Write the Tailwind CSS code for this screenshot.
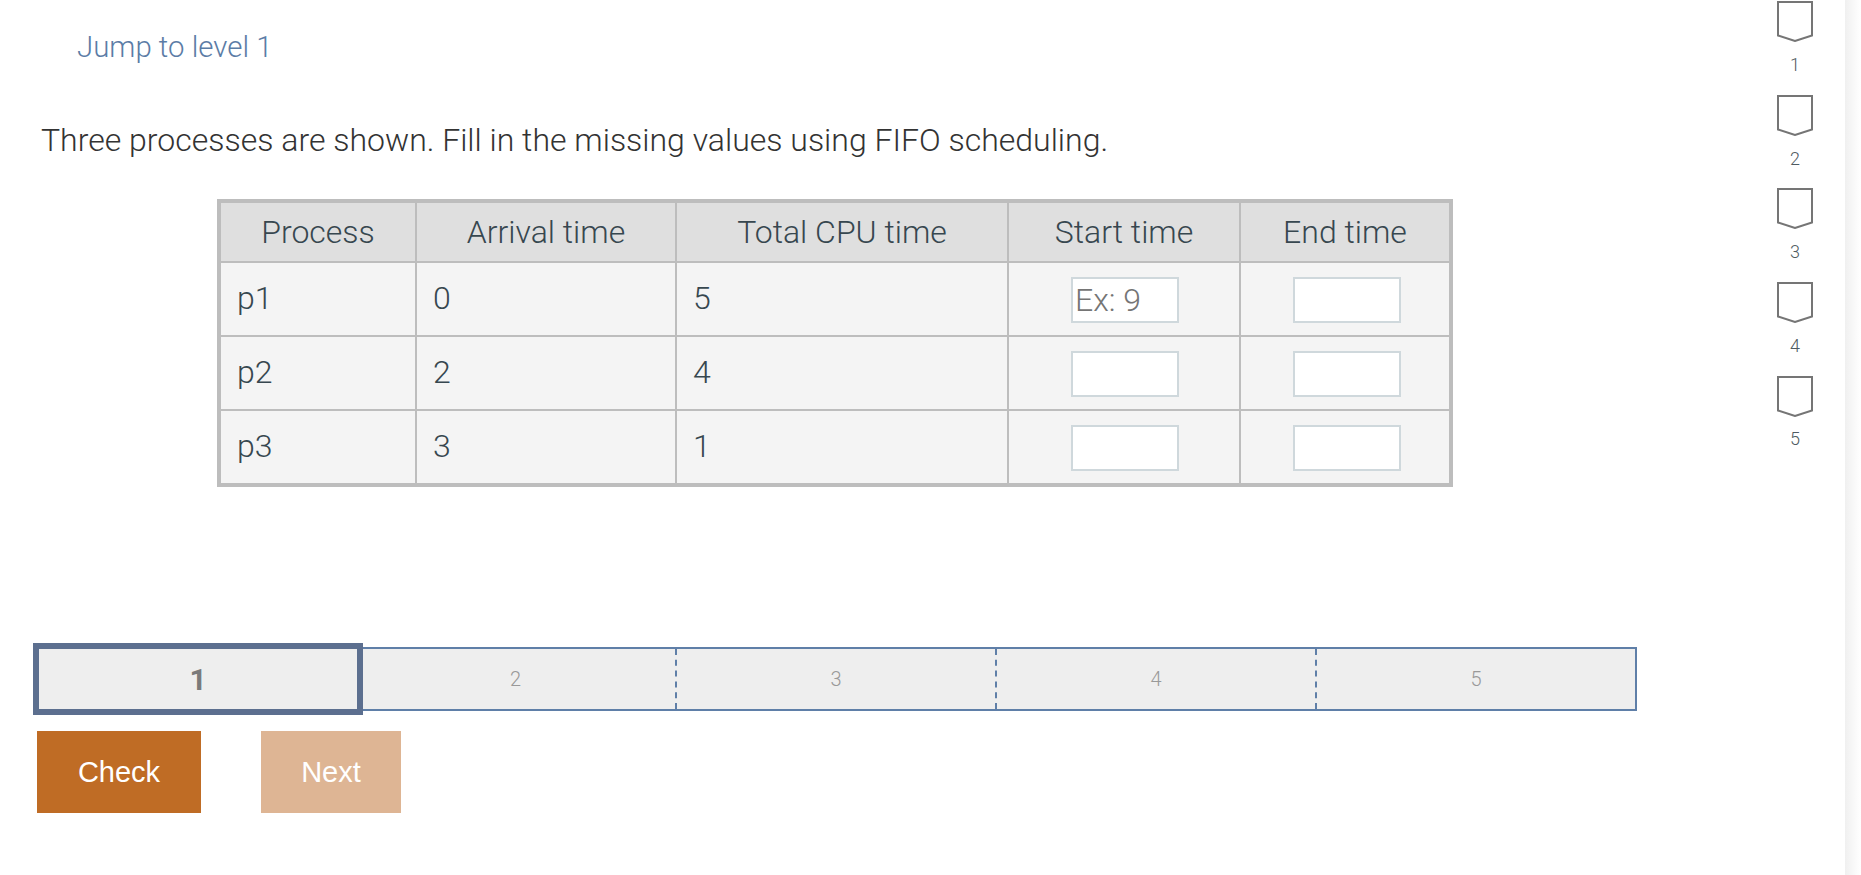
<!doctype html>
<html lang="en">
<head>
<meta charset="utf-8">
<title>Jump to level 1</title>
<script src="https://cdn.jsdelivr.net/npm/@tailwindcss/browser@4"></script>
</head>
<body class="bg-white font-['Roboto',sans-serif] font-light text-[#37474f] overflow-hidden">
<div class="flex h-[875px] w-[1861px]">

  <!-- main activity -->
  <main class="w-[1777px] shrink-0">
    <p class="pl-[77px] pt-[29px] h-[90px] text-[#5b7ca6] text-[29.4px] leading-[36px]">Jump to level 1</p>
    <p class="pl-[41px] pt-[30px] text-[32px] leading-[40px] text-[#333333]">Three processes are shown. Fill in the missing values using FIFO scheduling.</p>

    <table class="ml-[217px] mt-[39px] w-[1236px] table-fixed border-collapse border-4 border-[#bdbdbd] text-[32px]">
      <colgroup>
        <col class="w-[197px]"><col class="w-[260px]"><col class="w-[332px]"><col class="w-[232px]"><col>
      </colgroup>
      <thead>
        <tr class="h-[61px] bg-[#dfdfdf]">
          <th class="border-2 border-[#bdbdbd] font-light text-center">Process</th>
          <th class="border-2 border-[#bdbdbd] font-light text-center">Arrival time</th>
          <th class="border-2 border-[#bdbdbd] font-light text-center">Total CPU time</th>
          <th class="border-2 border-[#bdbdbd] font-light text-center">Start time</th>
          <th class="border-2 border-[#bdbdbd] font-light text-center">End time</th>
        </tr>
      </thead>
      <tbody class="bg-[#f4f4f4]">
        <tr class="h-[74px]">
          <td class="border-2 border-[#bdbdbd] pl-[16px] pb-[2px]">p1</td>
          <td class="border-2 border-[#bdbdbd] pl-[16px] pb-[2px]">0</td>
          <td class="border-2 border-[#bdbdbd] pl-[16px] pb-[2px]">5</td>
          <td class="border-2 border-[#bdbdbd] pl-[2px] pb-[2px] text-center"><input type="text" placeholder="Ex: 9" class="w-[108px] h-[46px] align-middle border-2 border-[#cfd8dc] bg-white pl-[2px] text-[32px] font-light placeholder:text-[#757575]"></td>
          <td class="border-2 border-[#bdbdbd] pl-[4px] pb-[2px] text-center"><input type="text" class="w-[108px] h-[46px] align-middle border-2 border-[#cfd8dc] bg-white"></td>
        </tr>
        <tr class="h-[74px]">
          <td class="border-2 border-[#bdbdbd] pl-[16px] pb-[2px]">p2</td>
          <td class="border-2 border-[#bdbdbd] pl-[16px] pb-[2px]">2</td>
          <td class="border-2 border-[#bdbdbd] pl-[16px] pb-[2px]">4</td>
          <td class="border-2 border-[#bdbdbd] pl-[2px] pb-[2px] text-center"><input type="text" class="w-[108px] h-[46px] align-middle border-2 border-[#cfd8dc] bg-white"></td>
          <td class="border-2 border-[#bdbdbd] pl-[4px] pb-[2px] text-center"><input type="text" class="w-[108px] h-[46px] align-middle border-2 border-[#cfd8dc] bg-white"></td>
        </tr>
        <tr class="h-[75px]">
          <td class="border-2 border-[#bdbdbd] pl-[16px] pb-[3px]">p3</td>
          <td class="border-2 border-[#bdbdbd] pl-[16px] pb-[3px]">3</td>
          <td class="border-2 border-[#bdbdbd] pl-[16px] pb-[3px]">1</td>
          <td class="border-2 border-[#bdbdbd] pl-[2px] pb-[2px] text-center"><input type="text" class="w-[108px] h-[46px] align-middle border-2 border-[#cfd8dc] bg-white"></td>
          <td class="border-2 border-[#bdbdbd] pl-[4px] pb-[2px] text-center"><input type="text" class="w-[108px] h-[46px] align-middle border-2 border-[#cfd8dc] bg-white"></td>
        </tr>
      </tbody>
    </table>

    <!-- level bar -->
    <div class="ml-[33px] mt-[156px] flex items-center">
      <div class="w-[330px] h-[72px] shrink-0 border-[6px] border-[#5c6f8f] bg-[#eeeeee] flex items-center justify-center font-bold text-[30px] text-[#7a7a7a]">1</div>
      <div class="flex h-[64px] border-2 border-l-0 border-[#5f7fa8] bg-[#eeeeee] text-[20px] text-[#999999]">
        <div class="w-[314px] pr-[7px] flex items-center justify-center border-r-2 border-dashed border-[#5f7fa8]">2</div>
        <div class="w-[320px] flex items-center justify-center border-r-2 border-dashed border-[#5f7fa8]">3</div>
        <div class="w-[320px] flex items-center justify-center border-r-2 border-dashed border-[#5f7fa8]">4</div>
        <div class="w-[318px] flex items-center justify-center">5</div>
      </div>
    </div>

    <div class="ml-[37px] mt-[16px] flex gap-[60px] font-['Liberation_Sans',sans-serif] font-normal text-[29px] text-white">
      <button type="button" class="w-[164px] h-[82px] pt-[2px] bg-[#bf6c25]">Check</button>
      <button type="button" class="w-[140px] h-[82px] pt-[2px] bg-[#deb594]">Next</button>
    </div>
  </main>

  <!-- level markers -->
  <aside class="w-[36px] shrink-0 flex flex-col items-center text-[18px] leading-[22px] text-[#4f5b62]">
    <svg class="mt-px" width="36" height="41" viewBox="0 0 36 41" fill="none" stroke="#757575" stroke-width="2"><path d="M1 1H35V34.5L18 40L1 34.5Z"/></svg>
    <span class="mt-[12px] mb-[19px]">1</span>
    <svg width="36" height="41" viewBox="0 0 36 41" fill="none" stroke="#757575" stroke-width="2"><path d="M1 1H35V34.5L18 40L1 34.5Z"/></svg>
    <span class="mt-[12px] mb-[18px]">2</span>
    <svg width="36" height="41" viewBox="0 0 36 41" fill="none" stroke="#757575" stroke-width="2"><path d="M1 1H35V34.5L18 40L1 34.5Z"/></svg>
    <span class="mt-[12px] mb-[19px]">3</span>
    <svg width="36" height="41" viewBox="0 0 36 41" fill="none" stroke="#757575" stroke-width="2"><path d="M1 1H35V34.5L18 40L1 34.5Z"/></svg>
    <span class="mt-[12px] mb-[19px]">4</span>
    <svg width="36" height="41" viewBox="0 0 36 41" fill="none" stroke="#757575" stroke-width="2"><path d="M1 1H35V34.5L18 40L1 34.5Z"/></svg>
    <span class="mt-[11px]">5</span>
  </aside>

  <div class="ml-[32px] w-[16px] h-full bg-linear-to-r from-[#f0f0f0] to-white"></div>
</div>
</body>
</html>
